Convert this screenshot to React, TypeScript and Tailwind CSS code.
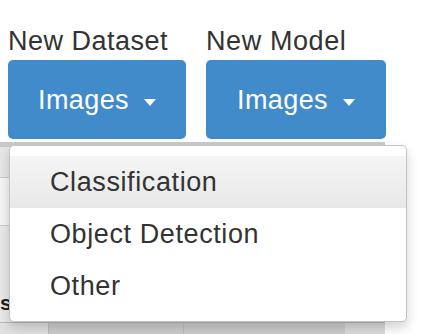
import React from "react";

const font = { fontFamily: '"Liberation Sans", Arial, sans-serif' };

const options = ["Classification", "Object Detection", "Other"];

function ImagesButton() {
  return (
    <button
      type="button"
      className="flex h-[79px] items-center justify-center gap-[15px] rounded-[5px] bg-[#428bca] text-[27px] leading-none tracking-[0.4px] text-white"
    >
      <span className="pt-[1px]">Images</span>
      <span className="mt-[6px] h-0 w-0 border-x-[6.5px] border-t-[7px] border-x-transparent border-t-white" />
    </button>
  );
}

export default function App() {
  return (
    <div className="h-[334px] w-[428px] overflow-hidden bg-white text-[#333]" style={font}>
      <div className="flex gap-[20px] pl-[8px] pt-[25px]">
        <div className="flex w-[178px] flex-col">
          <span className="mb-[3px] whitespace-nowrap text-[27px] leading-[32px] tracking-[0.5px]">New Dataset</span>
          <ImagesButton />
        </div>
        <div className="flex w-[180px] flex-col">
          <span className="mb-[3px] whitespace-nowrap text-[27px] leading-[32px] tracking-[0.6px]">New Model</span>
          <ImagesButton />
        </div>
      </div>

      <div className="relative mt-[3px]">
        {/* table behind the menu */}
        <div className="w-[385px]">
          <div className="h-[5px] bg-[#c9c9c9]" />
          <div className="h-[31px] border-b border-[#c8c8c8] bg-[#e6e6e6]" />
          <div className="h-[48px] border-b border-[#cccccc] bg-[#f5f5f5]" />
          <div className="flex h-[96px] items-end bg-[#e9e9e9] pb-[9px]">
            <span className="text-[21px] font-bold leading-none text-[#222]">s</span>
          </div>
          <div className="flex h-[12px] border-t border-[#b8b8b8]">
            <div className="w-[48px] bg-[#e2e2e2]" />
            <div className="w-[135px] border-l border-[#bcbcbc] bg-[#cdcdcd]" />
            <div className="w-[162px] border-l border-[#bcbcbc] bg-[#cdcdcd]" />
            <div className="flex-1 bg-[#dcdcdc]" />
          </div>
        </div>

        {/* open dropdown */}
        <ul className="absolute left-[9px] top-[3px] h-[177px] w-[398px] rounded-[5px] border border-[#c4c4c4] bg-white pt-[10px] shadow-[0_6px_12px_rgba(0,0,0,0.175)]">
          {options.map((option, i) => (
            <li
              key={option}
              className={`flex h-[52px] items-center pl-[40px] text-[27px] tracking-[0.6px] text-[#333] ${
                i === 0 ? "bg-gradient-to-b from-[#f5f5f5] to-[#e8e8e8]" : ""
              }`}
            >
              {option}
            </li>
          ))}
        </ul>
      </div>
    </div>
  );
}
